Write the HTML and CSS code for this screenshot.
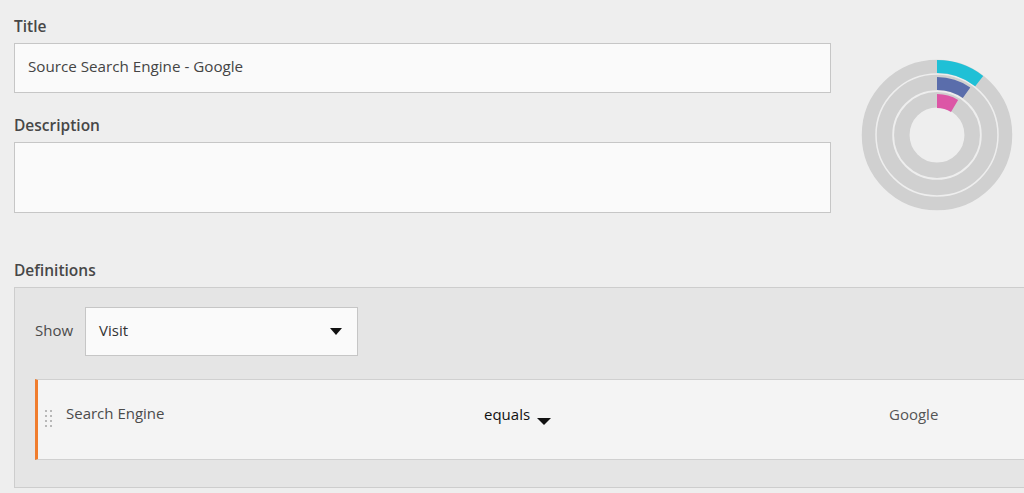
FILE: index.html
```html
<!DOCTYPE html>
<html lang="en">
<head>
    <meta charset="UTF-8">
    <meta name="viewport" content="width=device-width, initial-scale=1.0">
    <title>Segment Builder</title>
    <link rel="stylesheet" href="styles.css">
</head>
<body>
    <div class="page">
        <div class="top">
            <div class="fields">
                <label class="field-label">Title</label>
                <div class="text-input">Source Search Engine - Google</div>
                <label class="field-label description-label">Description</label>
                <div class="text-area"></div>
            </div>
            <div class="preview">
                <svg width="160" height="160" viewBox="0 0 160 160">
                    <circle cx="80" cy="80" r="68.5" fill="none" stroke="#d0d0d0" stroke-width="13.5" />
                    <circle cx="80" cy="80" r="52.5" fill="none" stroke="#d0d0d0" stroke-width="15.5" />
                    <circle cx="80" cy="80" r="35.2" fill="none" stroke="#d0d0d0" stroke-width="15.5" />
                    <path d="M80 5 A75 75 0 0 1 126.2 20.9 L118.2 31.2 A62 62 0 0 0 80 18 Z" fill="#1fc0d6" />
                    <path d="M80 22 A58 58 0 0 1 113.3 32.5 L105.8 43.1 A45 45 0 0 0 80 35 Z" fill="#5a6dab" />
                    <path d="M80 39 A41 41 0 0 1 101.1 44.9 L94 56.9 A27 27 0 0 0 80 53 Z" fill="#dc56a6" />
                </svg>
            </div>
        </div>

        <label class="field-label definitions-label">Definitions</label>
        <div class="definitions">
            <div class="show-row">
                <span class="show-label">Show</span>
                <div class="select">
                    <span>Visit</span>
                    <span class="caret"></span>
                </div>
            </div>
            <div class="rule">
                <div class="handle">
                    <i></i><i></i><i></i><i></i><i></i><i></i><i></i><i></i>
                </div>
                <span class="rule-name">Search Engine</span>
                <span class="operator">equals <span class="caret small"></span></span>
                <span class="rule-value">Google</span>
            </div>
        </div>
    </div>
</body>
</html>
```

FILE: styles.css
```css
* {
    margin: 0;
    padding: 0;
    box-sizing: border-box;
}
body {
    font-family: "Open Sans", Arial, sans-serif;
    background-color: #eeeeee;
    color: #4b4b4b;
    overflow: hidden;
    width: 1024px;
    height: 493px;
}
.page {
    padding: 16px 0 0 14px;
}
.top {
    display: flex;
}
.fields {
    width: 817px;
    display: flex;
    flex-direction: column;
}
.field-label {
    display: block;
    font-size: 15.5px;
    font-weight: 600;
    line-height: 20px;
    color: #474747;
    margin-bottom: 7px;
}
.description-label {
    margin-top: 22px;
}
.text-input {
    height: 50px;
    background: #fafafa;
    border: 1px solid #c6c6c6;
    font-size: 15.2px;
    color: #444;
    padding: 0 13px 4px;
    display: flex;
    align-items: center;
}
.text-area {
    height: 71px;
    background: #fafafa;
    border: 1px solid #c6c6c6;
}
.preview {
    margin-left: 26px;
    margin-top: 39px;
}
.preview svg {
    display: block;
}
.definitions-label {
    margin-top: 45px;
}
.definitions {
    width: 1030px;
    background: #e5e5e5;
    border: 1px solid #cdcdcd;
    padding: 19px 0 27px 20px;
}
.show-row {
    display: flex;
    align-items: center;
    margin-bottom: 23px;
}
.show-label {
    font-size: 15px;
    color: #4b4b4b;
    width: 50px;
    margin-top: -3px;
}
.select {
    width: 273px;
    height: 49px;
    background: #fafafa;
    border: 1px solid #c6c6c6;
    display: flex;
    align-items: center;
    justify-content: space-between;
    padding: 0 15px 3px 13px;
    font-size: 15px;
    color: #333;
}
.caret {
    display: inline-block;
    width: 0;
    height: 0;
    border-left: 6px solid transparent;
    border-right: 6px solid transparent;
    border-top: 7px solid #111;
    margin-top: 3px;
}
.caret.small {
    border-left-width: 7px;
    border-right-width: 7px;
    border-top-width: 7px;
    margin-left: 3px;
    vertical-align: -5px;
}
.rule {
    height: 81px;
    background: #f4f4f4;
    border: 1px solid #d0d0d0;
    border-left: 3px solid #f07d2e;
    display: flex;
    align-items: flex-start;
    padding: 23px 0 0 7px;
}
.handle {
    display: grid;
    grid-template-columns: 2px 2px;
    grid-auto-rows: 2px;
    column-gap: 3px;
    row-gap: 3px;
    margin-top: 7px;
    width: 21px;
}
.handle i {
    display: block;
    width: 2px;
    height: 2px;
    background: #a5a5a5;
    border-radius: 50%;
}
.rule-name {
    font-size: 15px;
    color: #4b4b4b;
    width: 418px;
}
.operator {
    font-size: 15px;
    color: #111;
    width: 405px;
    margin-top: 1px;
}
.rule-value {
    font-size: 15px;
    color: #555;
    margin-top: 1px;
}
```
